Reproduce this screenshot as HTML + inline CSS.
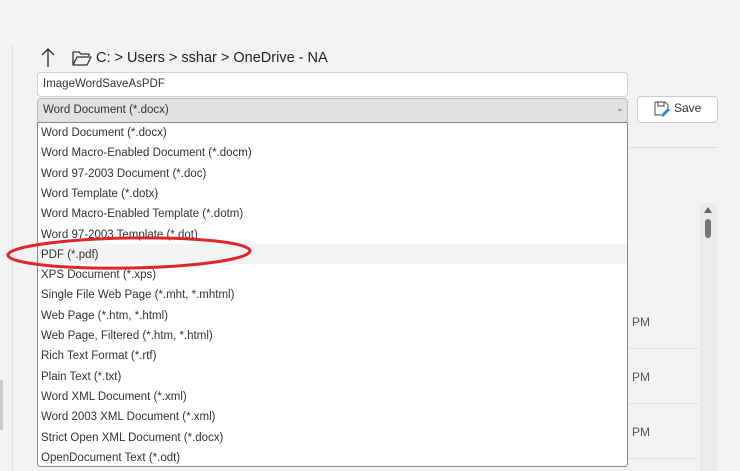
<!DOCTYPE html>
<html><head><style>
body{margin:0;width:740px;height:471px;background:#f3f3f3;position:relative;overflow:hidden;font-family:"Liberation Sans",sans-serif;color:#222}
.a{position:absolute}
.item{position:absolute;left:3px;font-size:11.5px;color:#333;height:20px;line-height:20px;width:586px}
</style></head><body>
<div class="a" style="left:12px;top:44px;width:1px;height:427px;background:#e0e0e0"></div>
<div class="a" style="left:0;top:380px;width:3px;height:50px;background:#ccc"></div>
<svg class="a" style="left:40px;top:46px" width="60" height="24">
<path d="M8 3V21M2 9L8 3L14 9" stroke="#333" stroke-width="1.4" fill="none"/>
<path d="M33 6H39L41 8H49V10M33 6V19H47L51 11H37L33 19" stroke="#333" stroke-width="1.3" fill="none" stroke-linejoin="round"/>
</svg>
<div class="a" style="left:96px;top:50px;font-size:14.5px;color:#222">C: &gt; Users &gt; sshar &gt; OneDrive - NA</div>
<div class="a" style="left:37px;top:72px;width:589px;height:23px;background:#fff;border:1px solid #d0d0d0;border-radius:4px"></div>
<div class="a" style="left:43px;top:78px;font-size:11.5px;color:#333">ImageWordSaveAsPDF</div>
<div class="a" style="left:37px;top:98px;width:589px;height:23px;background:#e2e2e2;border:1px solid #bbb;border-radius:4px"></div>
<div class="a" style="left:43px;top:104px;font-size:11.5px;color:#333">Word Document (*.docx)</div>
<div class="a" style="left:616px;top:103px;font-size:9px;color:#555">&#8964;</div>
<div class="a" style="left:637px;top:96px;width:79px;height:25px;background:#fff;border:1px solid #ccc;border-radius:4px"></div>
<svg class="a" style="left:653px;top:100px" width="18" height="18"><path d="M2 2H12L15 5V9M2 2V15H8M5 2V6H11V2" stroke="#666" stroke-width="1.2" fill="none"/><path d="M9 16L16 9" stroke="#2a8ad8" stroke-width="3"/></svg>
<div class="a" style="left:674px;top:101px;font-size:12px;color:#333">Save</div>
<div class="a" style="left:628px;top:147px;width:89px;height:1px;background:#ddd"></div>
<div class="a" style="left:700px;top:203px;width:17px;height:268px;background:#ebebeb;border-radius:6px 6px 0 0"></div>
<div class="a" style="left:704px;top:207px;width:0;height:0;border-left:4px solid transparent;border-right:4px solid transparent;border-bottom:6px solid #666"></div>
<div class="a" style="left:705px;top:219px;width:6px;height:19px;background:#777;border-radius:3px"></div>
<div class="a" style="left:628px;top:348px;width:70px;height:1px;background:#e0e0e0"></div>
<div class="a" style="left:628px;top:403px;width:70px;height:1px;background:#e0e0e0"></div>
<div class="a" style="left:628px;top:458px;width:70px;height:1px;background:#e0e0e0"></div>
<div class="a" style="left:632px;top:315px;font-size:12px;color:#555">PM</div>
<div class="a" style="left:632px;top:370px;font-size:12px;color:#555">PM</div>
<div class="a" style="left:632px;top:425px;font-size:12px;color:#555">PM</div>
<div class="a" style="left:37px;top:122px;width:589px;height:343px;background:#fff;border:1px solid #888;border-radius:0 0 3px 3px">
<div class="a" style="left:0;top:121px;width:589px;height:20px;background:#f3f3f3"></div>
<div class="item" style="top:0">Word Document (*.docx)</div>
<div class="item" style="top:20.3px">Word Macro-Enabled Document (*.docm)</div>
<div class="item" style="top:40.6px">Word 97-2003 Document (*.doc)</div>
<div class="item" style="top:60.9px">Word Template (*.dotx)</div>
<div class="item" style="top:81.2px">Word Macro-Enabled Template (*.dotm)</div>
<div class="item" style="top:101.5px">Word 97-2003 Template (*.dot)</div>
<div class="item" style="top:121.8px">PDF (*.pdf)</div>
<div class="item" style="top:142.1px">XPS Document (*.xps)</div>
<div class="item" style="top:162.4px">Single File Web Page (*.mht, *.mhtml)</div>
<div class="item" style="top:182.7px">Web Page (*.htm, *.html)</div>
<div class="item" style="top:203px">Web Page, Filtered (*.htm, *.html)</div>
<div class="item" style="top:223.3px">Rich Text Format (*.rtf)</div>
<div class="item" style="top:243.6px">Plain Text (*.txt)</div>
<div class="item" style="top:263.9px">Word XML Document (*.xml)</div>
<div class="item" style="top:284.2px">Word 2003 XML Document (*.xml)</div>
<div class="item" style="top:304.5px">Strict Open XML Document (*.docx)</div>
<div class="item" style="top:324.8px">OpenDocument Text (*.odt)</div>
</div>
<svg class="a" style="left:0;top:230px" width="260" height="50"><ellipse cx="129" cy="23" rx="121" ry="15" stroke="#e0252b" stroke-width="3" fill="none" transform="rotate(-1 129 23)"/></svg>
</body></html>
